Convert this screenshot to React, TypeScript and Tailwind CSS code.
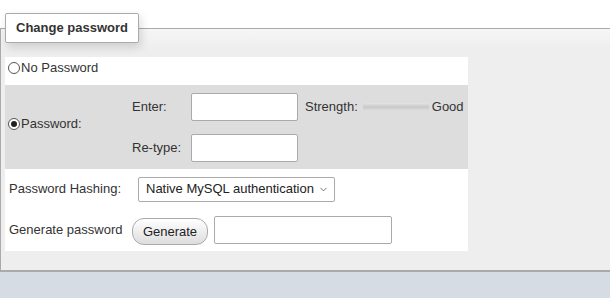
import { ChevronDown } from "lucide-react";

function Radio({ checked }: { checked?: boolean }) {
  return (
    <span className="inline-flex h-[12px] w-[12px] shrink-0 items-center justify-center rounded-full border border-[#555] bg-white">
      {checked && <span className="h-[6px] w-[6px] rounded-full bg-[#222]" />}
    </span>
  );
}

function TextBox({ w }: { w: string }) {
  return <div className={`h-[28px] ${w} rounded-[2px] border border-[#aaa] bg-white`} />;
}

export default function App() {
  return (
    <div className="flex h-[298px] w-[610px] flex-col bg-white font-['Liberation_Sans',Arial,sans-serif] text-[13px] text-[#333]">
      <div className="h-[28px] shrink-0 bg-white" />

      {/* fieldset */}
      <div className="relative flex-1 border-l border-t border-[#aaa] bg-gradient-to-b from-[#f6f6f6] to-[#eee] to-[20px]">
        <div className="absolute left-[4px] top-[-16px] flex h-[30px] w-[134px] items-center rounded-[2px] border border-[#aaa] bg-white pl-[10px] text-[13px] font-bold text-[#333] shadow-[2px_4px_10px_rgba(0,0,0,0.15)]">
          Change password
        </div>

        <div className="pl-[4px] pt-[28px]">
          <div className="w-[463px] bg-white">
            {/* no password */}
            <div className="flex h-[28px] items-start pl-[3px] pt-[3px]">
              <div className="flex h-[16px] items-center">
                <Radio />
                <span className="pl-px">No Password</span>
              </div>
            </div>

            {/* password */}
            <div className="flex h-[84px] items-center bg-[#ddd]">
              <div className="flex w-[127px] items-center pb-[6px] pl-[3px]">
                <Radio checked />
                <span className="pl-px">Password:</span>
              </div>
              <div className="flex flex-col gap-[13px]">
                <div className="flex items-center">
                  <span className="w-[59px]">Enter:</span>
                  <TextBox w="w-[107px]" />
                  <span className="pl-[7px]">Strength:</span>
                  <div className="ml-[5px] h-[8px] w-[66px] rounded-[2px] bg-gradient-to-b from-[#e4e4e4] via-[#c8c8c8] to-[#e0e0e0]" />
                  <span className="pl-[3px]">Good</span>
                </div>
                <div className="flex items-center">
                  <span className="w-[59px]">Re-type:</span>
                  <TextBox w="w-[107px]" />
                </div>
              </div>
            </div>

            {/* hashing */}
            <div className="flex h-[40px] items-center pl-[4px]">
              <span className="w-[129px]">Password Hashing:</span>
              <div className="flex h-[25px] w-[197px] items-center justify-between rounded-[2px] border border-[#aaa] bg-white pl-[7px] pr-[5px]">
                <span className="text-[#222]">Native MySQL authentication</span>
                <ChevronDown className="h-[11px] w-[11px] text-[#666]" strokeWidth={2} />
              </div>
            </div>

            {/* generate */}
            <div className="flex h-[42px] items-center pl-[4px]">
              <span className="w-[123px]">Generate password</span>
              <div className="mt-[3px] flex h-[27px] w-[76px] items-center justify-center rounded-[12px] border border-[#aaa] bg-gradient-to-b from-white to-[#ddd] text-[#222]">
                Generate
              </div>
              <div className="ml-[6px]">
                <TextBox w="w-[178px]" />
              </div>
            </div>
          </div>
        </div>
      </div>

      <div className="h-[28px] shrink-0 border-t-2 border-[#aaa] bg-[#d5dce3]" />
    </div>
  );
}
